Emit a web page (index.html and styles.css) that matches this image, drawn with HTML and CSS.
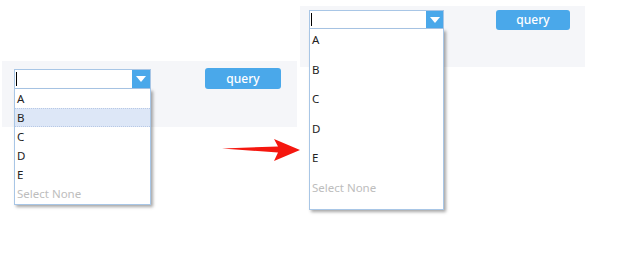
FILE: index.html
```html
<!DOCTYPE html>
<html>
<head>
<meta charset="utf-8">
<link rel="stylesheet" href="styles.css">
</head>
<body>
<div class="canvas">
  <section class="panel panel-before">
    <div class="combo">
      <div class="field"><span class="caret"></span><span class="trigger"><svg width="10" height="6" viewBox="0 0 10 6"><path d="M0 0h10L5 6z" fill="#fff"/></svg></span></div>
      <ul class="list">
        <li>A</li>
        <li class="hover">B</li>
        <li>C</li>
        <li>D</li>
        <li>E</li>
        <li class="none">Select None</li>
      </ul>
    </div>
    <button class="query">query</button>
  </section>
  <svg class="arrow" width="80" height="22" viewBox="0 0 80 22"><path d="M0 9.5 L56 7.5 L52 0 L78 11 L52 22 L56 13.5 Z" fill="#f5170f"/></svg>
  <section class="panel panel-after">
    <div class="combo">
      <div class="field"><span class="caret"></span><span class="trigger"><svg width="10" height="6" viewBox="0 0 10 6"><path d="M0 0h10L5 6z" fill="#fff"/></svg></span></div>
      <ul class="list">
        <li>A</li>
        <li>B</li>
        <li>C</li>
        <li>D</li>
        <li>E</li>
        <li class="none">Select None</li>
      </ul>
    </div>
    <button class="query">query</button>
  </section>
</div>
</body>
</html>
```
FILE: styles.css
```css
html, body {
  margin: 0;
  background: #fff;
  font-family: "Noto Sans", "Liberation Sans", sans-serif;
  font-size: 11.5px;
  color: #222;
}
.canvas {
  position: relative;
  display: flex;
  align-items: flex-start;
  width: 618px;
  height: 263px;
}
.panel {
  position: relative;
  display: flex;
  align-items: flex-start;
  background: #f5f6f9;
  box-sizing: border-box;
}
.panel-before {
  margin: 61px 0 0 2px;
  width: 295px;
  height: 66px;
  padding: 8px 0 0 12px;
}
.panel-after {
  margin: 6px 0 0 3px;
  width: 285px;
  height: 61px;
  padding: 4px 0 0 9px;
}
.combo {
  position: relative;
}
.field {
  display: flex;
  align-items: stretch;
  box-sizing: border-box;
  background: #fff;
  border: 1px solid #a8c6e6;
}
.panel-before .field { width: 137px; height: 20px; }
.panel-after .field { width: 135px; height: 19px; }
.caret {
  flex: 1;
  position: relative;
}
.caret::before {
  content: "";
  position: absolute;
  left: 1px;
  top: 2px;
  bottom: 2px;
  width: 1px;
  background: #000;
}
.trigger {
  width: 18px;
  background: #4aa8ea;
  display: flex;
  align-items: center;
  justify-content: center;
}
.panel-after .trigger { width: 17px; }
.list {
  position: absolute;
  left: 0;
  margin: 0;
  padding: 0;
  list-style: none;
  box-sizing: border-box;
  background: #fff;
  border: 1px solid #a8c6e6;
  border-top: none;
  box-shadow: 2px 2px 3px rgba(0, 0, 0, 0.35);
  z-index: 2;
}
.panel-before .list { top: 20px; width: 137px; height: 116px; }
.panel-after .list { top: 19px; width: 135px; height: 181px; }
.list li {
  padding-left: 2px;
  box-sizing: border-box;
  white-space: nowrap;
}
.panel-before .list li {
  height: 19px;
  border: 1px dotted transparent;
  border-left: 0;
  border-right: 0;
  line-height: 17px;
}
.panel-before .list li.hover {
  background: #dde7f7;
  border-color: #b8c9e6;
}
.panel-after .list li {
  height: 29.6px;
  line-height: 22px;
}
.list li.none {
  color: #bdbdbd;
}
.query {
  font-family: "Noto Sans", "Liberation Sans", sans-serif;
  font-size: 12px;
  font-weight: 500;
  color: #fff;
  background: #4aa8ea;
  border: none;
  border-radius: 3px;
  padding: 0;
  line-height: 1;
}
.panel-before .query { margin-left: 54px; margin-top: -1px; width: 76px; height: 21px; }
.panel-after .query { margin-left: 52px; margin-top: 0; width: 74px; height: 20px; }
.arrow {
  position: absolute;
  left: 222px;
  top: 139px;
}
```
